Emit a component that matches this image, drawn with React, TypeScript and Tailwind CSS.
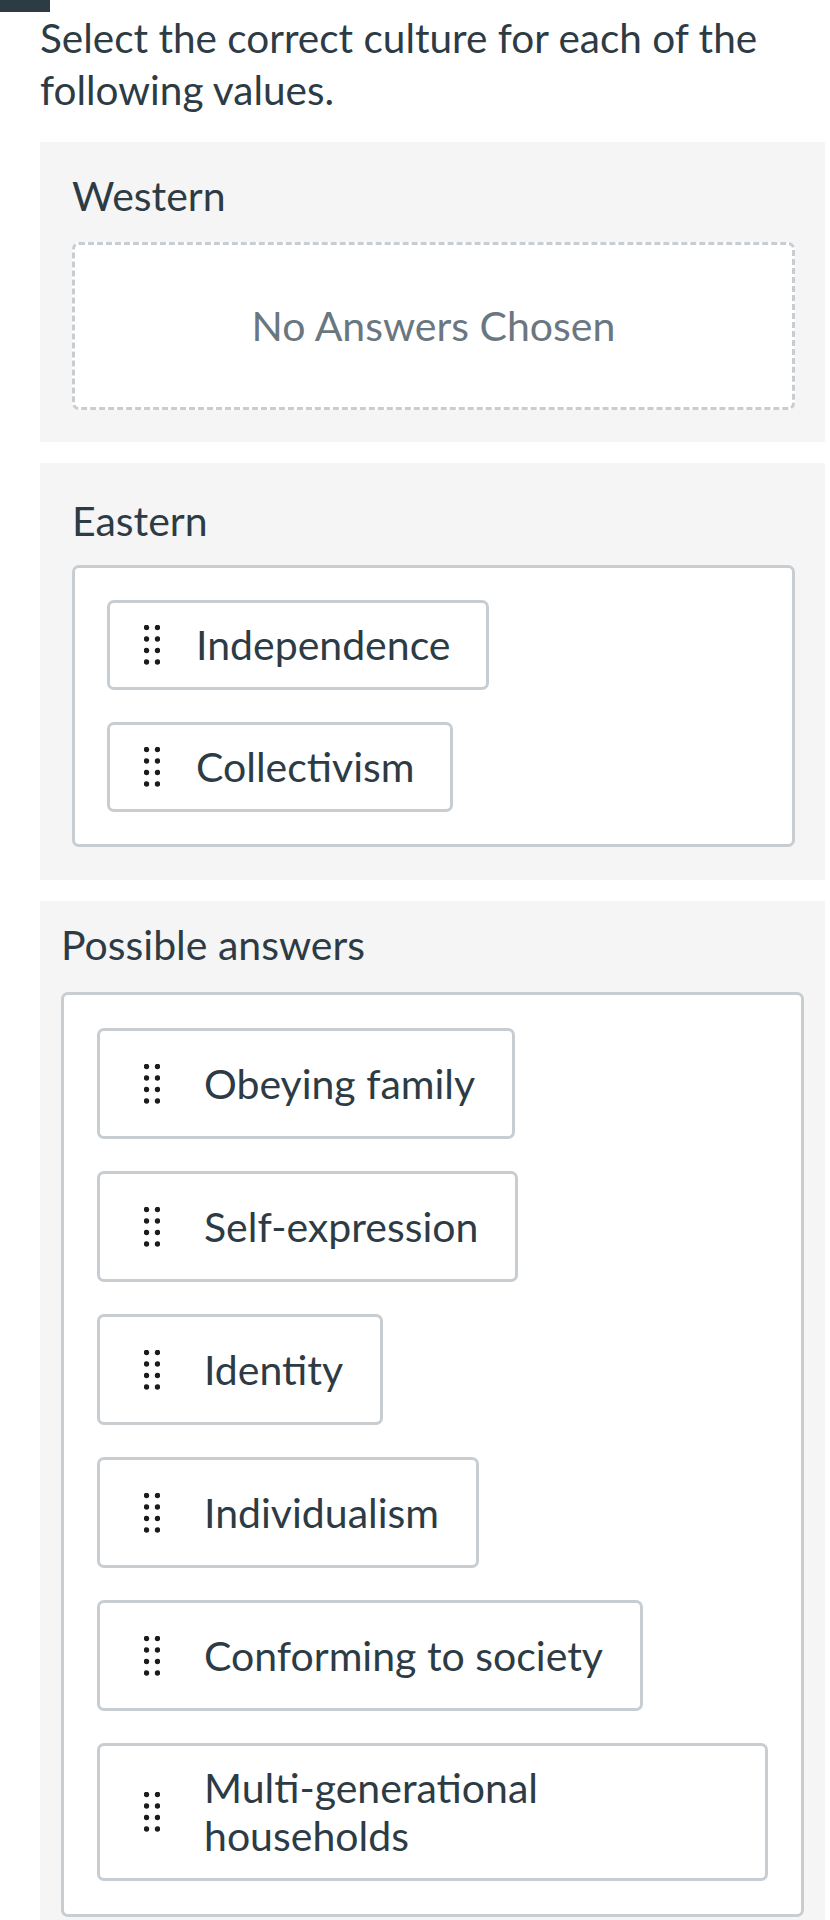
import React from 'react';

const ink = 'text-[#2d3b45]';

function Grip() {
    return (
        <svg width="16" height="40" viewBox="0 0 16 40" className="shrink-0" aria-hidden="true">
            {[2.5, 14, 25.5, 37].map((cy) => (
                <g key={cy}>
                    <circle cx="2.5" cy={cy} r="2.7" fill="#1b1b1b" />
                    <circle cx="13.5" cy={cy} r="2.7" fill="#1b1b1b" />
                </g>
            ))}
        </svg>
    );
}

function SmallChip({ label }: { label: string }) {
    return (
        <div className="flex w-fit max-w-full items-center rounded-[7px] border-[3px] border-[#c7cdd1] bg-white py-[18px] pl-[34px] pr-[35px]">
            <Grip />
            <span className={`ml-[36px] ${ink}`}>{label}</span>
        </div>
    );
}

function AnswerChip({ label }: { label: string }) {
    return (
        <div className="flex min-h-[111px] w-fit max-w-full items-center rounded-[7px] border-[3px] border-[#c7cdd1] bg-white py-[18px] pl-[44px] pr-[37px]">
            <Grip />
            <span className={`ml-[44px] ${ink}`}>{label}</span>
        </div>
    );
}

const answers = [
    'Obeying family',
    'Self-expression',
    'Identity',
    'Individualism',
    'Conforming to society',
    'Multi-generational households',
];

export default function App() {
    return (
        <div className="min-h-[1920px] w-[830px] bg-white text-[41px] leading-[48px]" style={{ fontFamily: 'Lato, "Noto Sans", sans-serif' }}>
            <div className="h-[12px] w-[50px] bg-[#2d3b45]" />

            <h1 className={`pl-[40px] pr-[30px] text-[40.5px] font-normal leading-[52px] ${ink}`}>
                Select the correct culture for each of the following values.
            </h1>

            <div className="ml-[40px] mr-[5px] mt-[26px] flex flex-col gap-[21px]">
                {/* Western */}
                <section className="bg-[#f5f5f5] pb-[32px] pl-[32px] pr-[30px] pt-[30px]">
                    <h2 className={`mb-[22px] ${ink}`}>Western</h2>
                    <div className="flex h-[168px] items-center justify-center rounded-[7px] border-[3px] border-dashed border-[#c7cdd1] bg-white text-[#6b7780]">
                        No Answers Chosen
                    </div>
                </section>

                {/* Eastern */}
                <section className="bg-[#f5f5f5] pb-[33px] pl-[32px] pr-[30px] pt-[34px]">
                    <h2 className={`mb-[20px] ${ink}`}>Eastern</h2>
                    <div className="flex flex-col gap-[32px] rounded-[7px] border-[3px] border-[#c7cdd1] bg-white p-[32px]">
                        <SmallChip label="Independence" />
                        <SmallChip label="Collectivism" />
                    </div>
                </section>

                {/* Possible answers */}
                <section className="bg-[#f5f5f5] px-[21px] pb-[3px] pt-[20px]">
                    <h2 className={`mb-[23px] ${ink}`}>Possible answers</h2>
                    <div className="flex flex-col gap-[32px] rounded-[7px] border-[3px] border-[#c7cdd1] bg-white p-[33px]">
                        {answers.map((a) => (
                            <AnswerChip key={a} label={a} />
                        ))}
                    </div>
                </section>
            </div>
        </div>
    );
}
